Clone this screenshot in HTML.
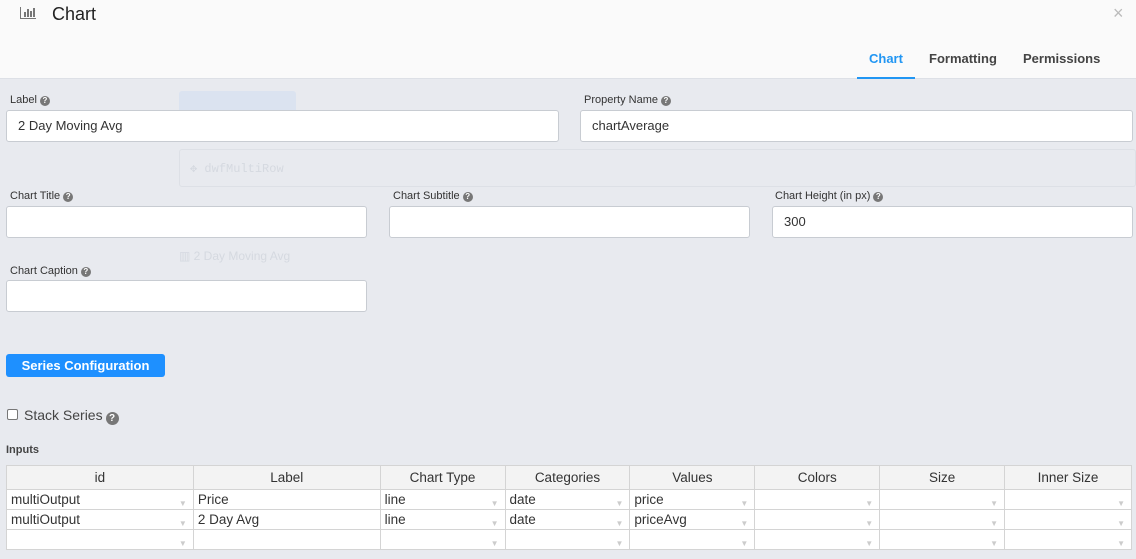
<!DOCTYPE html>
<html><head><style>
*{box-sizing:border-box;margin:0;padding:0}
body{width:1136px;height:559px;overflow:hidden;background:#e8eaef;font-family:"Liberation Sans",Arial,sans-serif;position:relative;color:#333}
.a{position:absolute}
.hdr{left:0;top:0;width:1136px;height:79px;background:#fafafa;border-bottom:1px solid #dde0e6}
.lbl{font-size:11px;color:#333}
.q{display:inline-block;width:10px;height:10px;border-radius:50%;background:#777;color:#fff;font-size:8px;line-height:10px;text-align:center;font-weight:bold;vertical-align:0px;margin-left:3px}
.inp{background:#fff;border:1px solid #c8ccd2;border-radius:3px;font-size:13px;padding-left:11px;line-height:30px;color:#333}
.ghost{color:#d5d9e0;font-size:12px}
table{border-collapse:collapse;font-size:13.5px;background:#fff}
td,th{border:1px solid #d4d4d4;height:20px;padding:0 4px;font-weight:normal;text-align:left;position:relative;color:#333;line-height:18px}
th{background:#f3f3f3;text-align:center;height:24px}
.ar::after{content:"▼";position:absolute;right:6px;top:5px;font-size:8px;color:#ccc}
</style></head><body>
<div class="a hdr"></div>
<div class="a" style="left:20px;top:7px;width:16px;height:12px;border-left:1.5px solid #777;border-bottom:1.5px solid #777"></div>
<div class="a" style="left:24px;top:12px;width:2px;height:5px;background:#777"></div>
<div class="a" style="left:27px;top:9px;width:2px;height:8px;background:#777"></div>
<div class="a" style="left:30px;top:11px;width:2px;height:6px;background:#777"></div>
<div class="a" style="left:33px;top:8px;width:2px;height:9px;background:#777"></div>
<div class="a" style="left:52px;top:4px;font-size:18px;color:#222">Chart</div>
<div class="a" style="left:1113px;top:3px;font-size:18px;color:#bbb">×</div>
<div class="a" style="left:869px;top:51px;font-size:13px;font-weight:bold;color:#2196f3">Chart</div>
<div class="a" style="left:857px;top:77px;width:58px;height:2px;background:#2196f3"></div>
<div class="a" style="left:929px;top:51px;font-size:13px;font-weight:bold;color:#444">Formatting</div>
<div class="a" style="left:1023px;top:51px;font-size:13px;font-weight:bold;color:#444">Permissions</div>

<div class="a" style="left:179px;top:91px;width:117px;height:22px;background:#dbe3f0;border-radius:3px"></div>
<div class="a" style="left:179px;top:149px;width:957px;height:38px;border:1px solid #dde0e6;border-radius:3px"></div>
<div class="a ghost" style="left:190px;top:161px;font-family:'Liberation Mono',monospace">✥ dwfMultiRow</div>
<div class="a ghost" style="left:179px;top:249px">▥ 2 Day Moving Avg</div>

<div class="a lbl" style="left:10px;top:94px">Label<span class="q">?</span></div>
<div class="a inp" style="left:6px;top:110px;width:553px;height:32px">2 Day Moving Avg</div>
<div class="a lbl" style="left:584px;top:94px">Property Name<span class="q">?</span></div>
<div class="a inp" style="left:580px;top:110px;width:553px;height:32px">chartAverage</div>

<div class="a lbl" style="left:10px;top:190px">Chart Title<span class="q">?</span></div>
<div class="a inp" style="left:6px;top:206px;width:361px;height:32px"></div>
<div class="a lbl" style="left:393px;top:190px">Chart Subtitle<span class="q">?</span></div>
<div class="a inp" style="left:389px;top:206px;width:361px;height:32px"></div>
<div class="a lbl" style="left:775px;top:190px">Chart Height (in px)<span class="q">?</span></div>
<div class="a inp" style="left:772px;top:206px;width:361px;height:32px">300</div>

<div class="a lbl" style="left:10px;top:265px">Chart Caption<span class="q">?</span></div>
<div class="a inp" style="left:6px;top:280px;width:361px;height:32px"></div>

<div class="a" style="left:6px;top:354px;width:159px;height:23px;background:#1e90ff;border-radius:3px;color:#fff;font-weight:bold;font-size:13px;text-align:center;line-height:23px">Series Configuration</div>

<div class="a" style="left:7px;top:409px;width:11px;height:11px;border:1px solid #777;border-radius:2px;background:#fff"></div>
<div class="a" style="left:24px;top:407px;font-size:14px;color:#444">Stack Series<span class="q" style="width:13px;height:13px;line-height:13px;font-size:10px;vertical-align:-1px">?</span></div>
<div class="a" style="left:6px;top:444px;font-size:11px;font-weight:bold;color:#444">Inputs</div>

<table class="a" style="left:6px;top:465px;width:1126px">
<colgroup><col style="width:187px"><col style="width:187px"><col style="width:125px"><col style="width:125px"><col style="width:125px"><col style="width:125px"><col style="width:125px"><col style="width:127px"></colgroup>
<tr><th>id</th><th>Label</th><th>Chart Type</th><th>Categories</th><th>Values</th><th>Colors</th><th>Size</th><th>Inner Size</th></tr>
<tr><td class="ar">multiOutput</td><td>Price</td><td class="ar">line</td><td class="ar">date</td><td class="ar">price</td><td class="ar"></td><td class="ar"></td><td class="ar"></td></tr>
<tr><td class="ar">multiOutput</td><td>2 Day Avg</td><td class="ar">line</td><td class="ar">date</td><td class="ar">priceAvg</td><td class="ar"></td><td class="ar"></td><td class="ar"></td></tr>
<tr><td class="ar"></td><td></td><td class="ar"></td><td class="ar"></td><td class="ar"></td><td class="ar"></td><td class="ar"></td><td class="ar"></td></tr>
</table>
</body></html>
